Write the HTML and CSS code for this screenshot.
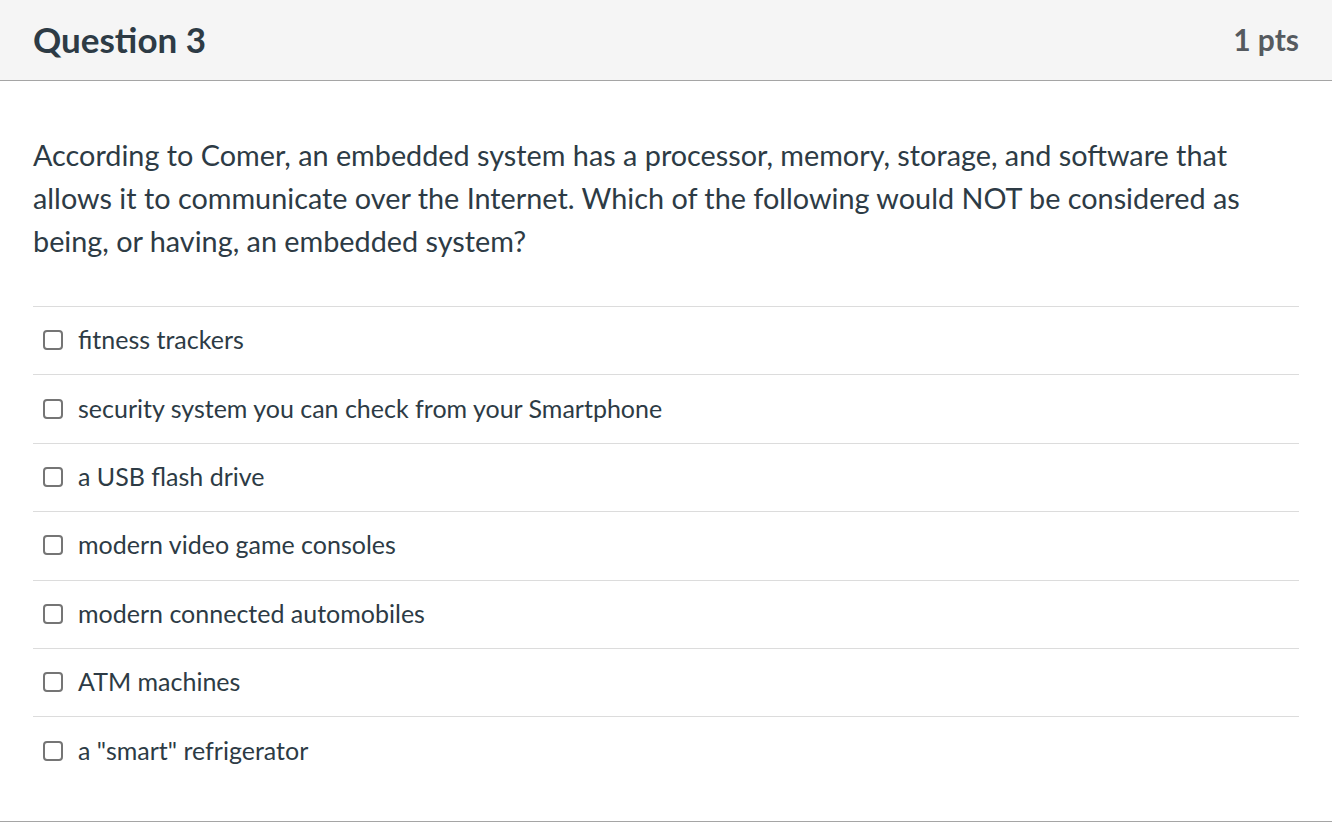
FILE: index.html
```html
<!DOCTYPE html>
<html>
<head>
<meta charset="utf-8">
<link rel="stylesheet" href="styles.css">
</head>
<body>
<div class="question">
  <div class="header">
    <h2 class="title">Question 3</h2>
    <div class="points">1 pts</div>
  </div>
  <div class="content">
    <p class="text">According to Comer, an embedded system has a processor, memory, storage, and software that allows it to communicate over the Internet. Which of the following would NOT be considered as being, or having, an embedded system?</p>
    <div class="answers">
      <label class="answer"><span class="box"></span><span>fitness trackers</span></label>
      <label class="answer"><span class="box"></span><span>security system you can check from your Smartphone</span></label>
      <label class="answer"><span class="box"></span><span>a USB flash drive</span></label>
      <label class="answer"><span class="box"></span><span>modern video game consoles</span></label>
      <label class="answer"><span class="box"></span><span>modern connected automobiles</span></label>
      <label class="answer"><span class="box"></span><span>ATM machines</span></label>
      <label class="answer"><span class="box"></span><span>a "smart" refrigerator</span></label>
    </div>
  </div>
</div>
</body>
</html>
```
FILE: styles.css
```css
* { box-sizing: border-box; }
html, body { margin: 0; padding: 0; background: #fff; }
body { font-family: Lato, "Open Sans", sans-serif; color: #2d3b45; }
.question {
  width: 1332px;
  height: 822px;
  border-bottom: 1px solid #a5a5a5;
}
.header {
  height: 81px;
  background: #f5f5f5;
  border-bottom: 1px solid #a5a5a5;
  display: flex;
  align-items: center;
  justify-content: space-between;
  padding: 0 33px 3px 33px;
}
.title {
  margin: 0;
  font-size: 35px;
  font-weight: 700;
  color: #2d3b45;
}
.points {
  font-size: 30px;
  font-weight: 700;
  color: #555a5f;
}
.content {
  padding: 0 33px;
}
.text {
  margin: 0;
  padding-top: 52.5px;
  font-size: 28.8px;
  line-height: 43px;
}
.answers {
  margin-top: 43.5px;
}
.answer {
  display: flex;
  align-items: center;
  gap: 15px;
  height: 68.4px;
  border-top: 1px solid #dcdcdc;
  padding: 0 0 3px 10px;
  font-size: 25px;
}
.box {
  width: 20px;
  height: 20px;
  border: 2px solid #757575;
  border-radius: 4px;
  flex: none;
  margin-top: 2px;
}
```
